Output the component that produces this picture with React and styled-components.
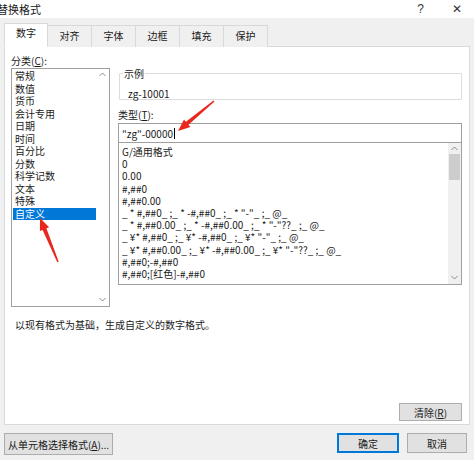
import React from 'react';
import styled, { createGlobalStyle } from 'styled-components';

const GlobalStyle = createGlobalStyle`
  html, body {
    margin: 0;
    padding: 0;
    background: #f0f0f0;
  }
  body {
    width: 474px;
    height: 460px;
    overflow: hidden;
    font-family: "Noto Sans CJK SC", "Noto Sans", sans-serif;
    font-size: 10px;
    color: #1a1a1a;
  }
`;

const Window = styled.div`
  position: relative;
  width: 474px;
  height: 460px;
  background: #f0f0f0;
  display: flex;
  flex-direction: column;
`;

const TitleBar = styled.div`
  height: 18px;
  background: #ffffff;
  display: flex;
  align-items: center;
  justify-content: space-between;
  padding: 0 12px 0 0;
  margin-left: -3px;
  font-size: 11px;
`;

const TitleControls = styled.div`
  display: flex;
  align-items: center;
  gap: 28px;
  color: #333;
  font-family: "Liberation Sans", sans-serif;
  font-size: 12px;
`;

const TabBar = styled.div`
  height: 28px;
  display: flex;
  align-items: flex-end;
  padding-left: 4px;
`;

const Tab = styled.div`
  width: 44px;
  height: ${p => (p.$active ? '24px' : '22px')};
  box-sizing: border-box;
  display: flex;
  align-items: center;
  justify-content: center;
  background: ${p => (p.$active ? '#ffffff' : '#f0f0f0')};
  border: 1px solid #d9d9d9;
  border-bottom: ${p => (p.$active ? '1px solid #ffffff' : 'none')};
  border-left: ${p => (p.$first || p.$active ? '1px solid #d9d9d9' : 'none')};
  margin-bottom: -1px;
  position: relative;
  z-index: ${p => (p.$active ? 2 : 1)};
  padding-bottom: ${p => (p.$active ? '5px' : '3px')};
`;

const Panel = styled.div`
  margin: 0 4px;
  height: 379px;
  box-sizing: border-box;
  background: #ffffff;
  border: 1px solid #d9d9d9;
  padding: 7px 7px 3px 6px;
  display: flex;
  flex-direction: column;
`;

const Columns = styled.div`
  display: grid;
  grid-template-columns: 99px 344px;
  column-gap: 8px;
  align-items: start;
`;

const Column = styled.div`
  display: flex;
  flex-direction: column;
`;

const Label = styled.div`
  line-height: 13px;
  height: 13px;
`;

const ListBox = styled.div`
  margin-top: ${p => p.$top || 0}px;
  height: ${p => p.$height}px;
  box-sizing: border-box;
  border: 1px solid #a0a0a0;
  display: flex;
  overflow: hidden;
  background: #fff;
`;

const Items = styled.div`
  flex: 1;
  padding: ${p => p.$padTop}px 0 0 1px;
  overflow: hidden;
  white-space: nowrap;
`;

const Item = styled.div`
  height: ${p => p.$lh}px;
  line-height: ${p => p.$lh}px;
  padding-left: 2px;
  background: ${p => (p.$selected ? '#0078d7' : 'transparent')};
  color: ${p => (p.$selected ? '#ffffff' : '#1a1a1a')};
`;

const ScrollBar = styled.div`
  width: 13px;
  flex-shrink: 0;
  display: flex;
  flex-direction: column;
  align-items: center;
  justify-content: space-between;
  background: ${p => (p.$track ? '#f0f0f0' : '#ffffff')};
  padding: 3px 0 4px;
  box-sizing: border-box;
`;

const ScrollMid = styled.div`
  flex: 1;
  display: flex;
  flex-direction: column;
  align-items: center;
  gap: 3px;
`;

const Thumb = styled.div`
  width: 11px;
  height: 26px;
  background: #cdcdcd;
`;

const GroupBox = styled.fieldset`
  margin: 14px 0 0 1px;
  padding: 4px 8px 0 7px;
  height: 32px;
  box-sizing: border-box;
  border: 1px solid #dcdcdc;
  border-radius: 1px;
  min-width: 0;
  legend {
    padding: 0 1px;
    margin-left: -4px;
    line-height: 11px;
    font-size: 10px;
  }
`;

const SampleValue = styled.div`
  line-height: 13px;
  padding-left: 1px;
  margin-top: 4px;
`;

const TypeLabel = styled(Label)`
  margin-top: 8px;
`;

const TextInput = styled.div`
  margin-top: 2px;
  height: 19px;
  box-sizing: border-box;
  border: 1px solid #a0a0a0;
  border-bottom: none;
  display: flex;
  align-items: center;
  padding-left: 3px;
`;

const Caret = styled.span`
  display: inline-block;
  width: 1px;
  height: 11px;
  background: #000;
  margin-left: 1px;
`;

const Description = styled.div`
  margin-top: 11px;
  padding-left: 4px;
  line-height: 13px;
`;

const Spacer = styled.div`
  flex: 1;
`;

const ButtonRow = styled.div`
  display: flex;
  justify-content: flex-end;
  align-items: center;
  gap: ${p => p.$gap || 0}px;
`;

const Button = styled.div`
  width: ${p => p.$w}px;
  height: ${p => p.$h || 20}px;
  box-sizing: border-box;
  display: flex;
  align-items: center;
  justify-content: center;
  background: #e1e1e1;
  border: 1px solid ${p => (p.$primary ? '#0078d7' : '#adadad')};
  box-shadow: ${p => (p.$primary ? 'inset 0 0 0 1px #0078d7' : 'none')};
  color: #1a1a1a;
`;

const Footer = styled.div`
  flex: 1;
  display: flex;
  align-items: flex-start;
  justify-content: space-between;
  padding: 8px 7px 0 4px;
`;

const Overlay = styled.svg`
  position: absolute;
  left: 0;
  top: 0;
  pointer-events: none;
`;

const Chevron = ({ up }) => (
  <svg width="7" height="5" viewBox="0 0 7 5">
    <path
      d={up ? 'M0.5 4 L3.5 1 L6.5 4' : 'M0.5 1 L3.5 4 L6.5 1'}
      fill="none"
      stroke="#8a8a8a"
      strokeWidth="1"
    />
  </svg>
);

const categories = [
  '常规', '数值', '货币', '会计专用', '日期', '时间', '百分比',
  '分数', '科学记数', '文本', '特殊', '自定义'
];

const formats = [
  'G/通用格式',
  '0',
  '0.00',
  '#,##0',
  '#,##0.00',
  '_ * #,##0_ ;_ * -#,##0_ ;_ * "-"_ ;_ @_',
  '_ * #,##0.00_ ;_ * -#,##0.00_ ;_ * "-"??_ ;_ @_',
  '_ ¥* #,##0_ ;_ ¥* -#,##0_ ;_ ¥* "-"_ ;_ @_',
  '_ ¥* #,##0.00_ ;_ ¥* -#,##0.00_ ;_ ¥* "-"??_ ;_ @_',
  '#,##0;-#,##0',
  '#,##0;[红色]-#,##0'
];

const tabs = ['数字', '对齐', '字体', '边框', '填充', '保护'];

export default function App() {
  return (
    <>
      <GlobalStyle />
      <Window>
        <TitleBar>
          <span>替换格式</span>
          <TitleControls>
            <span>?</span>
            <span>✕</span>
          </TitleControls>
        </TitleBar>

        <TabBar>
          {tabs.map((t, i) => (
            <Tab key={t} $active={i === 0} $first={i === 0}>{t}</Tab>
          ))}
        </TabBar>

        <Panel>
          <Columns>
            <Column>
              <Label>分类(<u>C</u>):</Label>
              <ListBox $top={1} $height={239}>
                <Items $padTop={1}>
                  {categories.map(c => (
                    <Item key={c} $lh={12.5} $selected={c === '自定义'}>{c}</Item>
                  ))}
                </Items>
                <ScrollBar>
                  <Chevron up />
                  <Chevron />
                </ScrollBar>
              </ListBox>
            </Column>

            <Column>
              <GroupBox>
                <legend>示例</legend>
                <SampleValue>zg-10001</SampleValue>
              </GroupBox>
              <TypeLabel>类型(<u>T</u>):</TypeLabel>
              <TextInput>
                "zg"-00000<Caret />
              </TextInput>
              <ListBox $height={143}>
                <Items $padTop={3}>
                  {formats.map(f => (
                    <Item key={f} $lh={12.2}>{f}</Item>
                  ))}
                </Items>
                <ScrollBar $track>
                  <ScrollMid>
                    <Chevron up />
                    <Thumb />
                  </ScrollMid>
                  <Chevron />
                </ScrollBar>
              </ListBox>
            </Column>
          </Columns>

          <Description>以现有格式为基础，生成自定义的数字格式。</Description>
          <Spacer />
          <ButtonRow>
            <Button $w={63} $h={18}>清除(<u>R</u>)</Button>
          </ButtonRow>
        </Panel>

        <Footer>
          <Button $w={109} $h={22}>从单元格选择格式(<u>A</u>)...</Button>
          <ButtonRow $gap={8}>
            <Button $w={62} $primary>确定</Button>
            <Button $w={60}>取消</Button>
          </ButtonRow>
        </Footer>

        <Overlay width="474" height="460" viewBox="0 0 474 460">
          <polygon
            points="214.5,101.6 188.5,124.8 190.4,127.1 178,131 184.0,119.5 185.9,121.8 213.5,100.4"
            fill="#e8281e"
          />
          <polygon
            points="58.7,261.7 46.4,228.3 49.1,227.2 40,218 39.9,231.0 42.6,229.9 57.3,262.3"
            fill="#e8281e"
          />
        </Overlay>
      </Window>
    </>
  );
}
